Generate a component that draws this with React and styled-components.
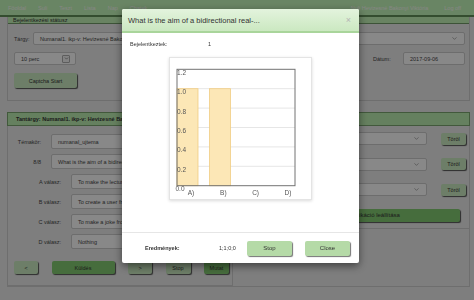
import React from 'react'
import styled, { createGlobalStyle } from 'styled-components'
import { ChevronDown } from 'lucide-react'

const navLinks = ['Főoldal', 'Suli', 'Teszt', 'Lista', 'Nap', 'Chatek']

const questionRows = [
    { label: 'Témakör:', value: 'numanal_ujtema' },
    { label: '8/8', value: 'What is the aim of a bidirectional real-time poll?' },
    { label: 'A válasz:', value: 'To make the lecture more interactive', answer: true },
    { label: 'B válasz:', value: 'To create a user friendly survey', answer: true },
    { label: 'C válasz:', value: 'To make a joke from the students', answer: true },
    { label: 'D válasz:', value: 'Nothing', answer: true },
]

const results = [
    { label: 'A)', value: 1 },
    { label: 'B)', value: 1 },
    { label: 'C)', value: 0 },
    { label: 'D)', value: 0 },
]

const ticks = [0, 0.2, 0.4, 0.6, 0.8, 1.0, 1.2]
const PLOT = { left: 8, right: 126, top: 12.3, bottom: 128.7 }
const yOf = v => PLOT.bottom - (v / 1.2) * (PLOT.bottom - PLOT.top)

const ResultChart = () => (
    <svg width="143" height="143" viewBox="0 0 143 143">
        {ticks.slice(1, -1).map(t => (
            <line key={t} x1={PLOT.left} x2={PLOT.right} y1={yOf(t)} y2={yOf(t)} stroke="#e6e6e6" strokeWidth="1" />
        ))}
        {results.map((r, i) => (
            <rect
                key={r.label}
                x={PLOT.left + i * 32.5}
                y={yOf(r.value)}
                width="21"
                height={PLOT.bottom - yOf(r.value)}
                fill="#fce7b6"
                stroke="#f1cd83"
                strokeWidth="0.8"
            />
        ))}
        <rect
            x={PLOT.left}
            y={PLOT.top}
            width={PLOT.right - PLOT.left}
            height={PLOT.bottom - PLOT.top}
            fill="none"
            stroke="#727272"
            strokeWidth="1"
        />
        {ticks.map(t => (
            <text key={t} x={t === 0 ? 6.5 : PLOT.left} y={yOf(t) + 5.5} fontSize="6.5" fill="#555" fontFamily="Liberation Sans, Arial, sans-serif">
                {t.toFixed(1)}
            </text>
        ))}
        {results.map((r, i) => (
            <text key={r.label} x={22 + i * 32.3} y="137.5" textAnchor="middle" fontSize="6.5" fill="#555" fontFamily="Liberation Sans, Arial, sans-serif">
                {r.label}
            </text>
        ))}
    </svg>
)

const App = () => {
    return (
        <>
            <GlobalStyle />
            <Nav>
                <NavLinks>
                    {navLinks.map(l => <NavLink key={l}>{l}</NavLink>)}
                </NavLinks>
                <NavRight>
                    <NavLink>Nuli Hevizesné Bakonyi Viktória</NavLink>
                    <NavLink>Log off</NavLink>
                </NavRight>
            </Nav>

            <Panel>
                <PanelHead>Bejelentkezési státusz</PanelHead>
                <StatusBody>
                    <FieldRow>
                        <Label $w={19}>Tárgy:</Label>
                        <SelectBox $grow>
                            Numanal1. ikp-v: Hevizesné Bakonyi Viktória
                            <ChevronDown size={7} color="#777" strokeWidth={2} />
                        </SelectBox>
                    </FieldRow>
                    <FieldRow $mt={7}>
                        <SelectBox $w={62}>
                            10 perc
                            <ArrowBox><ChevronDown size={5} color="#666" strokeWidth={3} /></ArrowBox>
                        </SelectBox>
                        <Spacer />
                        <Label $w={30}>Dátum:</Label>
                        <TextBox $w={62}>2017-09-06</TextBox>
                    </FieldRow>
                    <GreenButton $w={63} $h={15} $mt={8}>Captcha Start</GreenButton>
                </StatusBody>
            </Panel>

            <Panel $mt={11}>
                <SubjectHead>Tantárgy: Numanal1. ikp-v: Hevizesné Bakonyi Viktória</SubjectHead>
                <Columns>
                    <QuestionColumn>
                        {questionRows.map(r => (
                            <QuestionRow key={r.label} $answer={r.answer}>
                                <Label $w={30} $right>{r.label}</Label>
                                <TextBox $grow $h={15}>{r.value}</TextBox>
                            </QuestionRow>
                        ))}
                        <ButtonRow>
                            <GreenButton $w={24}>&lt;</GreenButton>
                            <GreenButton $w={63} $dark>Küldés</GreenButton>
                            <GreenButton $w={24}>&gt;</GreenButton>
                            <GreenButton $w={25}>Stop</GreenButton>
                            <GreenButton $w={25} $dark>Mutat</GreenButton>
                        </ButtonRow>
                    </QuestionColumn>
                    <SideColumn>
                        {[0, 1, 2].map(i => (
                            <SideRow key={i}>
                                <SelectBox $grow $h={13}>
                                    <span />
                                    <ChevronDown size={7} color="#777" strokeWidth={2} />
                                </SelectBox>
                                <GreenButton $w={25} $h={12}>Töröl</GreenButton>
                            </SideRow>
                        ))}
                        <WideButton>Kommunikáció leállítása</WideButton>
                    </SideColumn>
                </Columns>
            </Panel>

            <Backdrop />

            <Modal>
                <ModalHead>
                    <ModalTitle>What is the aim of a bidirectional real-...</ModalTitle>
                    <CloseX>×</CloseX>
                </ModalHead>
                <ModalBody>
                    <InfoRow>
                        <InfoLabel $w={78}>Bejelentkeztek:</InfoLabel>
                        <span>1</span>
                    </InfoRow>
                    <ChartCard>
                        <ResultChart />
                    </ChartCard>
                </ModalBody>
                <ModalFoot>
                    <InfoLabel $w={74} $bold>Eredmények:</InfoLabel>
                    <InfoLabel $w={28}>{results.map(r => r.value).join(';')}</InfoLabel>
                    <ModalButton>Stop</ModalButton>
                    <ModalButton>Close</ModalButton>
                </ModalFoot>
            </Modal>
        </>
    )
}

const GlobalStyle = createGlobalStyle`
    html, body {
        margin: 0;
        padding: 0;
    }
    body {
        background: #e6e6e6;
        font-family: "Liberation Sans", Arial, sans-serif;
        color: #444;
        overflow: hidden;
    }
`

const Nav = styled.div`
    display: flex;
    align-items: center;
    height: 15px;
    padding: 0 8px;
    background: #c0f2b6;
    border-bottom: 2px solid #5f8c56;
`

const NavLinks = styled.div`
    display: flex;
    gap: 12px;
`

const NavRight = styled.div`
    margin-left: auto;
    display: flex;
    gap: 16px;
    padding-right: 5px;
`

const NavLink = styled.span`
    font-size: 5.5px;
    color: #f2f6f0;
    white-space: nowrap;
`

const Panel = styled.div`
    margin: ${p => p.$mt || 0}px 4px 0 7px;
    border: 1px solid #c8c8c8;
    border-top: none;
`

const PanelHead = styled.div`
    height: 6px;
    line-height: 6px;
    padding-left: 5px;
    background: #bfeeb3;
    border-bottom: 1px solid #6f9866;
    font-size: 5.5px;
    color: #333;
`

const SubjectHead = styled.div`
    height: 12px;
    line-height: 12px;
    padding-left: 8px;
    background: #b9e9ad;
    border: 1px solid #78a26e;
    margin: 0 -1px;
    font-size: 5.5px;
    font-weight: bold;
    color: #333;
    white-space: nowrap;
`

const StatusBody = styled.div`
    padding: 8px 4px 12px 6px;
`

const FieldRow = styled.div`
    display: flex;
    align-items: center;
    margin-top: ${p => p.$mt || 0}px;
`

const Spacer = styled.div`
    flex: 1;
`

const Label = styled.div`
    width: ${p => p.$w}px;
    flex-shrink: 0;
    font-size: 5.5px;
    color: #444;
    text-align: ${p => (p.$right ? 'right' : 'left')};
    padding-right: ${p => (p.$right ? 10 : 0)}px;
    box-sizing: content-box;
    white-space: nowrap;
`

const SelectBox = styled.div`
    display: flex;
    align-items: center;
    justify-content: space-between;
    box-sizing: border-box;
    ${p => (p.$grow ? 'flex: 1;' : `width: ${p.$w}px;`)}
    height: ${p => p.$h || 13}px;
    padding: 0 6px;
    background: #f8f8f8;
    border: 1px solid #c6c6c6;
    border-radius: 2px;
    font-size: 5.5px;
    color: #444;
    white-space: nowrap;
    overflow: hidden;
`

const ArrowBox = styled.span`
    display: flex;
    align-items: center;
    justify-content: center;
    width: 6px;
    height: 6px;
    border: 1px solid #aaa;
    border-radius: 1px;
    background: #eee;
    margin-right: -1px;
`

const TextBox = styled.div`
    display: flex;
    align-items: center;
    box-sizing: border-box;
    ${p => (p.$grow ? 'flex: 1; min-width: 0;' : `width: ${p.$w}px;`)}
    height: ${p => p.$h || 13}px;
    padding: 0 6px;
    background: #f8f8f8;
    border: 1px solid #c6c6c6;
    border-radius: 2px;
    font-size: 5.5px;
    color: #444;
    white-space: nowrap;
    overflow: hidden;
`

const GreenButton = styled.div`
    display: flex;
    align-items: center;
    justify-content: center;
    flex-shrink: 0;
    width: ${p => p.$w}px;
    height: ${p => p.$h || 13}px;
    margin-top: ${p => p.$mt || 0}px;
    background: ${p => (p.$dark ? '#80c66f' : '#c7e6bd')};
    border-radius: 2px;
    box-shadow: 1px 1px 1px rgba(0, 0, 0, 0.65);
    font-size: 5.5px;
    color: #333;
    white-space: nowrap;
`

const Columns = styled.div`
    display: grid;
    grid-template-columns: 225px 1fr;
    align-items: start;
`

const QuestionColumn = styled.div`
    padding: 8px 5px 11px 0;
    border-right: 1px solid #c8c8c8;
    border-bottom: 1px solid #c8c8c8;
`

const QuestionRow = styled.div`
    display: flex;
    align-items: center;
    padding-left: ${p => (p.$answer ? 23 : 3)}px;
    margin-bottom: 5px;
`

const ButtonRow = styled.div`
    display: flex;
    gap: 13.5px;
    padding-left: 6px;
    margin-top: 12px;
`

const SideColumn = styled.div`
    display: flex;
    flex-direction: column;
    padding: 6px 3px 6px 8px;
    border-bottom: 1px solid #c8c8c8;
`

const SideRow = styled.div`
    display: flex;
    align-items: center;
    gap: 14px;
    margin-bottom: 12.5px;
`

const WideButton = styled(GreenButton)`
    align-self: flex-end;
    width: 185px;
    margin-right: 6px;
    background: #80c66f;
    font-size: 6px;
`

const Backdrop = styled.div`
    position: fixed;
    inset: 0;
    background: rgba(0, 0, 0, 0.45);
`

const Modal = styled.div`
    position: fixed;
    left: 122px;
    top: 9px;
    width: 237px;
    height: 254px;
    display: flex;
    flex-direction: column;
    background: #fff;
    border-radius: 2px;
    box-shadow: 0 3px 9px rgba(0, 0, 0, 0.5);
    overflow: hidden;
`

const ModalHead = styled.div`
    display: flex;
    align-items: center;
    height: 22px;
    padding: 0 6px;
    background: linear-gradient(#e3f3dd, #cbe8c1);
    border-bottom: 2px solid #a9d59b;
`

const ModalTitle = styled.div`
    font-size: 7.5px;
    color: #333;
    white-space: nowrap;
`

const CloseX = styled.div`
    margin-left: auto;
    margin-right: 2px;
    font-size: 9px;
    line-height: 9px;
    color: #b5b5b5;
`

const ModalBody = styled.div`
    flex: 1;
    padding: 7px 8px 0;
`

const InfoRow = styled.div`
    display: flex;
    align-items: center;
    height: 8px;
    font-size: 5.5px;
    color: #333;
`

const InfoLabel = styled.div`
    width: ${p => p.$w}px;
    flex-shrink: 0;
    font-size: 5.5px;
    font-weight: ${p => (p.$bold ? 'bold' : 'normal')};
    color: #333;
`

const ChartCard = styled.div`
    width: 143px;
    height: 143px;
    margin: 9px auto 0;
    box-sizing: border-box;
    border: 1px solid #e4e4e4;
    box-shadow: 0 1px 3px rgba(0, 0, 0, 0.15);
    svg {
        display: block;
        margin: -1px;
    }
`

const ModalFoot = styled.div`
    display: flex;
    align-items: center;
    gap: 0;
    height: 30px;
    padding-left: 23px;
    border-top: 1px solid #e6e6e6;

    & > div:last-child {
        margin-left: 13px;
    }
`

const ModalButton = styled.div`
    display: flex;
    align-items: center;
    justify-content: center;
    width: 45px;
    height: 15px;
    background: #b5daa7;
    border-radius: 2px;
    box-shadow: 1px 1px 1px rgba(0, 0, 0, 0.55);
    font-size: 6px;
    color: #333;
`

export default App
